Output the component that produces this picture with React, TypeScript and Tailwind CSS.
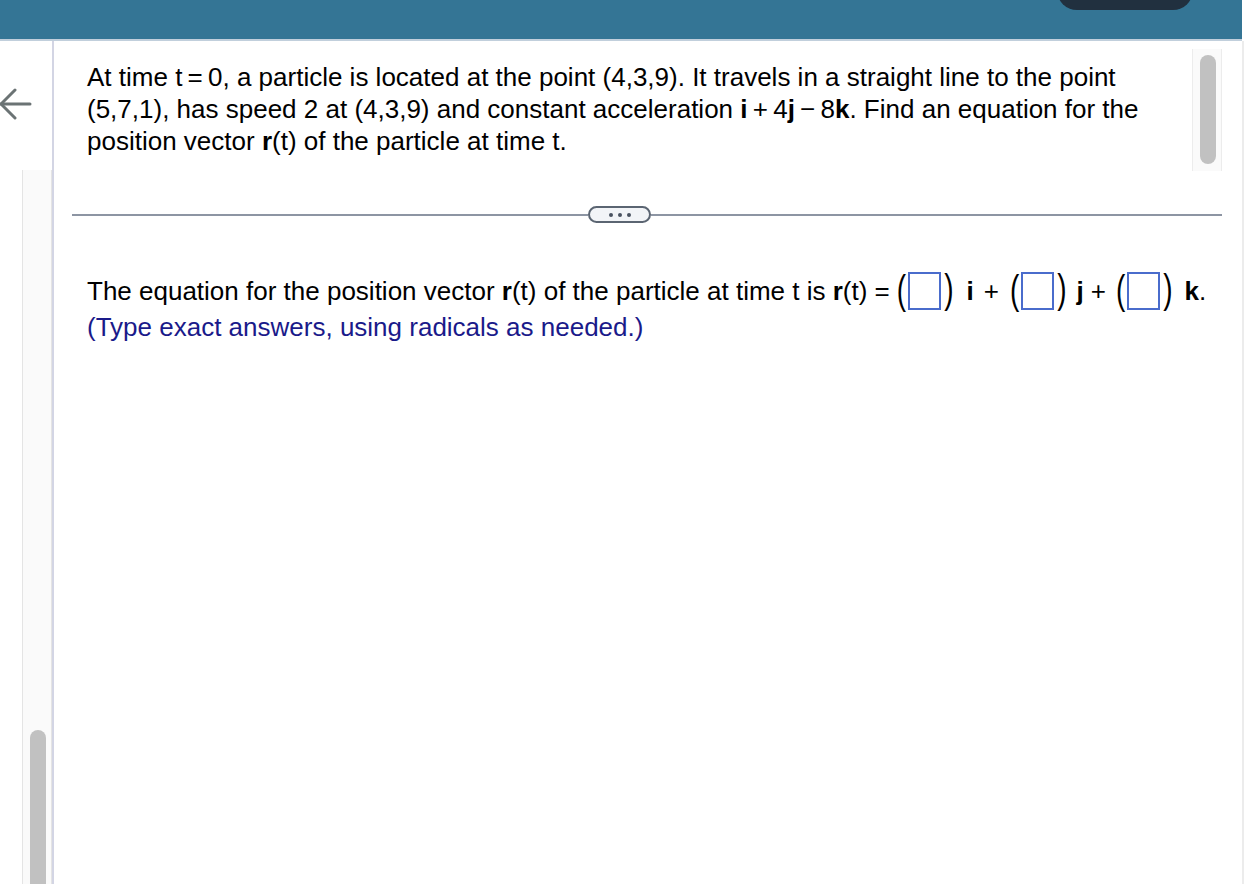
import React from 'react';

const Paren = ({ side }: { side: 'l' | 'r' }) => (
    <span className="inline-block text-[28px] leading-none scale-y-[1.45] font-normal">
        {side === 'l' ? '(' : ')'}
    </span>
);

const AnswerBox = () => (
    <span className="inline-flex items-center">
        <Paren side="l" />
        <span className="ml-[2px] w-[33px] h-[38px] border-2 border-[#4a6ccc] bg-white" />
        <span className="ml-[3px]">
            <Paren side="r" />
        </span>
    </span>
);

export default function App() {
    return (
        <div className="h-screen w-full overflow-hidden bg-white flex flex-col font-['Liberation_Sans',Arial,sans-serif] text-black">
            {/* top bar */}
            <header className="w-[1242px] h-[41px] shrink-0 bg-[#347595] border-b-2 border-[#c1cfdc] flex justify-end overflow-hidden">
                <div className="mr-[49px] -mt-[30px] w-[136px] h-[40px] rounded-full bg-[#21303f]" />
            </header>

            <div className="flex flex-1 min-h-0">
                {/* left rail */}
                <aside className="w-[54px] shrink-0 border-r-2 border-[#d3d5e4] flex flex-col">
                    <div className="pt-[46px]">
                        <svg width="32" height="34" viewBox="0 0 32 34" fill="none" stroke="#6b7374" strokeWidth="3" strokeLinecap="round" strokeLinejoin="round">
                            <path d="M30 17H1" />
                            <path d="M15 3L1 17L15 31" />
                        </svg>
                    </div>
                    <div className="mt-[49px] ml-[22px] w-[30px] flex-1 border-x border-[#e4e4e4] bg-[#fafafa] pt-[560px] overflow-hidden">
                        <div className="ml-[7px] w-[16px] h-[200px] rounded-t-full bg-[#c1c1c1]" />
                    </div>
                </aside>

                {/* main */}
                <main className="flex-1 border-r-2 border-[#ececec] pl-[18px] pr-[20px] flex flex-col">
                    <div className="flex">
                        <div className="flex-1 pl-[15px] pt-[20px] text-[26px] leading-[32px] whitespace-nowrap">
                            At time t{'\u2009'}={'\u2009'}0, a particle is located at the point (4,3,9). It travels in a straight line to the point
                            <br />
                            (5,7,1), has speed 2 at (4,3,9) and constant acceleration <b>i</b>{'\u2009'}+{'\u2009'}4<b>j</b>{'\u2009'}−{'\u2009'}8<b>k</b>. Find an equation for the
                            <br />
                            position vector <b>r</b>(t) of the particle at time t.
                        </div>
                        <div className="mt-[8px] w-[30px] h-[122px] shrink-0 border-x border-[#ececec] bg-[#fafafa] pt-[6px]">
                            <div className="ml-[7px] w-[16px] h-[109px] rounded-full bg-[#c1c1c1]" />
                        </div>
                    </div>

                    <div className="mt-[35px] flex items-center h-[17px]">
                        <div className="w-[516px] h-[2px] bg-[#8d95a3]" />
                        <div className="w-[63px] h-[17px] rounded-full border-2 border-[#5b6572] bg-[#f2f4f7] flex items-center justify-center gap-[5px]">
                            <span className="w-[4px] h-[4px] rounded-full bg-[#4a5260]" />
                            <span className="w-[4px] h-[4px] rounded-full bg-[#4a5260]" />
                            <span className="w-[4px] h-[4px] rounded-full bg-[#4a5260]" />
                        </div>
                        <div className="flex-1 h-[2px] bg-[#8d95a3]" />
                    </div>

                    <div className="mt-[48px] pl-[15px] text-[26px]">
                        <div className="flex items-center h-[40px] whitespace-pre">
                            <span>The equation for the position vector <b>r</b>(t) of the particle at time t is <b>r</b>(t) =</span>
                            <span className="ml-[7px]"><AnswerBox /></span>
                            <span className="ml-[13px] font-bold">i</span>
                            <span className="ml-[10px]">+</span>
                            <span className="ml-[11px]"><AnswerBox /></span>
                            <span className="ml-[10px] font-bold">j</span>
                            <span className="ml-[7px]">+</span>
                            <span className="ml-[10px]"><AnswerBox /></span>
                            <span className="ml-[12px]"><b>k</b>.</span>
                        </div>
                        <div className="leading-[32px] text-[#1a1a8a]">(Type exact answers, using radicals as needed.)</div>
                    </div>
                </main>
                <div className="w-[4px] shrink-0" />
            </div>
        </div>
    );
}
